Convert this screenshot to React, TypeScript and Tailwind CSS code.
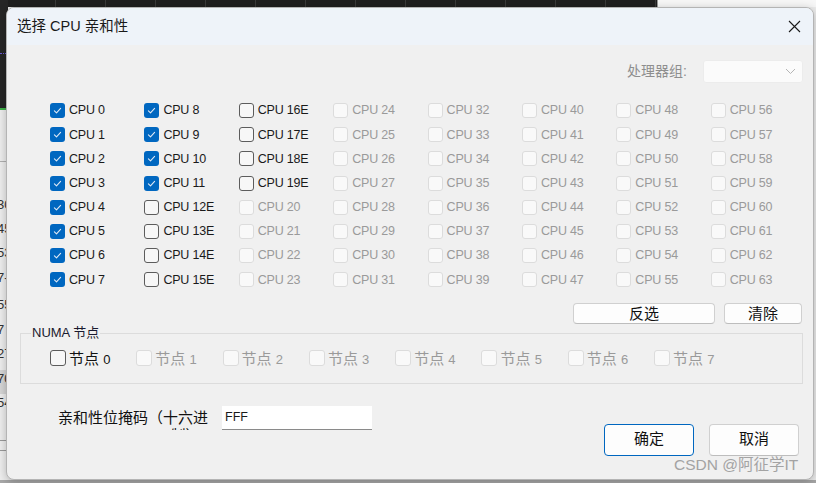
import React from "react";

const FONT = { fontFamily: '"Liberation Sans", "Noto Sans CJK SC", sans-serif' };

type State = "checked" | "unchecked" | "disabled";

function Box({ state, size = 15 }: { state: State; size?: number }) {
  if (state === "checked") {
    return (
      <span className="flex shrink-0 items-center justify-center rounded-[3px] bg-[#0067c0]" style={{ width: size, height: size }}>
        <svg width="11" height="11" viewBox="0 0 11 11" fill="none">
          <path d="M2.4 5.8 L4.5 7.8 L8.6 3.3" stroke="#dfe9f5" strokeWidth="1.1" strokeLinecap="round" strokeLinejoin="round" />
        </svg>
      </span>
    );
  }
  if (state === "unchecked") {
    return <span className="shrink-0 rounded-[3px] border border-[#5c5c5c] bg-[#f7f7f7]" style={{ width: size, height: size }} />;
  }
  return <span className="shrink-0 rounded-[3px] border border-[#dcdcdc] bg-[#f9f9f9]" style={{ width: size, height: size }} />;
}

function CpuItem({ n }: { n: number }) {
  const state: State = n < 12 ? "checked" : n < 20 ? "unchecked" : "disabled";
  const label = n >= 12 && n < 20 ? `CPU ${n}E` : `CPU ${n}`;
  return (
    <div className="flex items-center gap-[4px]">
      <Box state={state} />
      <span className={`text-[12.5px] leading-none tracking-[-0.2px] ${state === "disabled" ? "text-[#9a9a9a]" : "text-[#1a1a1a]"}`}>{label}</span>
    </div>
  );
}

export default function App() {
  const cpus = Array.from({ length: 64 }, (_, i) => i);
  const nodes = Array.from({ length: 8 }, (_, i) => i);
  const leftTexts = [
    { y: 198, t: "30" },
    { y: 222, t: "45" },
    { y: 246, t: "53" },
    { y: 271, t: "7-" },
    { y: 298, t: "55" },
    { y: 323, t: "7" },
    { y: 347, t: "27" },
    { y: 372, t: "70" },
    { y: 396, t: "54" },
  ];
  return (
    <div className="relative h-[483px] w-[816px] overflow-hidden bg-[#ececec]" style={FONT}>
      {/* background desktop content */}
      <div className="absolute left-0 top-0 h-[7px] w-[657px] bg-[#1f1f1f]">
        {Array.from({ length: 13 }, (_, i) => (
          <span key={i} className="absolute top-0 h-[7px] w-px bg-[#3a3a3a]" style={{ left: 55 + i * 50 }} />
        ))}
      </div>
      <div className="absolute left-[657px] top-0 h-[7px] w-[159px] border-l border-[#9a9a9a] bg-[#f7f7f7]" />
      <div className="absolute left-0 top-0 h-[109px] w-[8px] bg-[#262626]">
        <span className="absolute left-0 top-[53px] h-px w-[8px] border-t border-dotted border-[#6b5bd6]" />
      </div>
      <div className="absolute left-0 top-[108px] h-[2px] w-[8px] bg-[#3fb24a]" />
      <div className="absolute left-0 top-[110px] h-[370px] w-[8px] bg-[#eeeeee]">
        <span className="absolute left-0 top-[51px] h-px w-[8px] bg-[#b0b0b0]" />
        <span className="absolute left-0 top-[260px] h-[24px] w-[8px] bg-[#d6d6d6]" />
        <span className="absolute left-0 top-[330px] h-px w-[8px] bg-[#9a9a9a]" />
        <span className="absolute left-0 top-[340px] h-px w-[8px] bg-[#9a9a9a]" />
      </div>
      {leftTexts.map((l) => (
        <span key={l.y} className="absolute left-[-3px] text-[13px] leading-none text-[#333]" style={{ top: l.y }}>
          {l.t}
        </span>
      ))}
      <div className="absolute left-0 top-[480px] h-[3px] w-[816px] bg-[#a8a8a8]" />

      {/* dialog */}
      <div className="absolute left-[6px] top-[7px] flex h-[473px] w-[808px] flex-col overflow-hidden rounded-[8px] border border-[#b4b4b4] bg-[#f0f0f0] shadow-[0_2px_10px_rgba(0,0,0,0.25)]">
        <div className="flex h-[37px] shrink-0 items-center justify-between bg-[#eef3f9] pl-[10px] pr-[12px]">
          <span className="text-[14.5px] text-[#1a1a1a]">选择 CPU 亲和性</span>
          <svg width="13" height="13" viewBox="0 0 13 13" fill="none">
            <path d="M1 1 L12 12 M12 1 L1 12" stroke="#1a1a1a" strokeWidth="1.1" />
          </svg>
        </div>

        <div className="flex flex-col pt-[15px]">
          <div className="flex h-[23px] items-center justify-end gap-[16px] pr-[10px]">
            <span className="text-[14px] text-[#8e8e8e]">处理器组:</span>
            <div className="flex h-[23px] w-[100px] items-center justify-end rounded-[3px] border border-[#ececec] bg-[#fbfbfb] pr-[6px]">
              <svg width="11" height="7" viewBox="0 0 11 7" fill="none">
                <path d="M1 1 L5.5 5.5 L10 1" stroke="#b5b5b5" strokeWidth="1" />
              </svg>
            </div>
          </div>

          <div className="ml-[43px] mt-[15.5px] grid grid-flow-col grid-cols-[repeat(8,94.4px)] grid-rows-[repeat(8,24.2px)]">
            {cpus.map((n) => (
              <CpuItem key={n} n={n} />
            ))}
          </div>

          <div className="mt-[10.5px] flex justify-end gap-[9px] pr-[11px]">
            <button className="h-[21px] w-[142px] rounded-[4px] border border-[#d0d0d0] border-b-[#bdbdbd] bg-[#fdfdfd] text-[15px] leading-none text-[#111]">反选</button>
            <button className="h-[21px] w-[78px] rounded-[4px] border border-[#d0d0d0] border-b-[#bdbdbd] bg-[#fdfdfd] text-[15px] leading-none text-[#111]">清除</button>
          </div>

          <div className="relative ml-[13px] mr-[10px] mt-[9px] flex h-[51px] items-center border border-[#dcdcdc] pl-[29px]">
            <span className="absolute left-[10px] top-[-9px] bg-[#f0f0f0] px-px text-[13px] leading-[16px] text-[#1a1a2e]">NUMA 节点</span>
            <div className="grid grid-cols-[repeat(8,86.3px)]">
              {nodes.map((i) => (
                <div key={i} className="flex items-center gap-[3px]">
                  <Box state={i === 0 ? "unchecked" : "disabled"} size={16} />
                  <span className={`text-[15px] leading-none ${i === 0 ? "text-[#111]" : "text-[#9a9a9a]"}`}>
                    节点 <span className="text-[13px]">{i}</span>
                  </span>
                </div>
              ))}
            </div>
          </div>

          <div className="mt-[22px] flex items-start justify-between pr-[14px]">
            <div className="flex items-start pl-[50px]">
              <div className="mt-[3px] h-[21px] w-[151px] overflow-hidden text-right text-[15px] leading-[18px] text-[#111]">
                亲和性位掩码（十六进制）：
              </div>
              <div className="ml-[14px] flex h-[24px] w-[150px] items-center border-b border-[#8a8a8a] bg-white pl-[3px] text-[12.5px] text-[#1a1a1a]">
                FFF
              </div>
            </div>
            <div className="mt-[18px] flex gap-[15px]">
              <button className="h-[32px] w-[90px] rounded-[4px] border-[1.5px] border-[#0067c0] bg-[#fdfdfd] text-[15px] text-[#111]">确定</button>
              <button className="h-[32px] w-[90px] rounded-[4px] border border-[#d0d0d0] border-b-[#bdbdbd] bg-[#fdfdfd] text-[15px] text-[#111]">取消</button>
            </div>
          </div>
        </div>
      </div>

      <span className="absolute left-[674px] top-[455px] text-[15.5px] leading-[20px] text-[#a3a3a3]">CSDN @阿征学IT</span>
    </div>
  );
}
